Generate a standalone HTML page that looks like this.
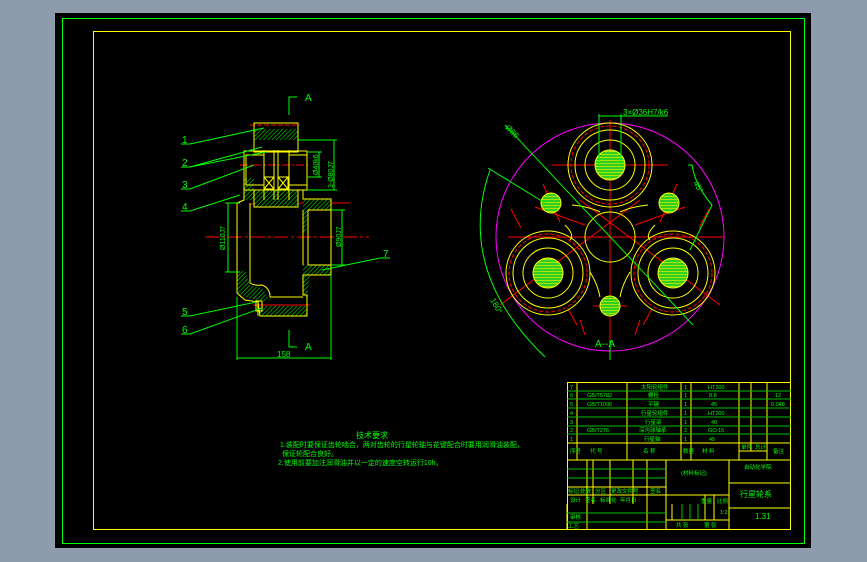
<!DOCTYPE html>
<html><head><meta charset="utf-8"><style>
html,body{margin:0;padding:0;width:867px;height:562px;overflow:hidden;background:#8e9bac;}
svg{display:block}
text{font-family:"Liberation Sans","Noto Sans CJK SC",sans-serif;}
</style></head><body>
<svg width="867" height="562" viewBox="0 0 867 562" xmlns="http://www.w3.org/2000/svg">
<defs>
<pattern id="h" width="3" height="3" patternUnits="userSpaceOnUse" patternTransform="rotate(45)">
<rect width="3" height="3" fill="#000"/><line x1="0" y1="0" x2="0" y2="3" stroke="#00e000" stroke-width="1.2"/></pattern>
<pattern id="g" width="3" height="3" patternUnits="userSpaceOnUse">
<rect width="3" height="3" fill="#2fd020"/><line x1="0" y1="1.5" x2="3" y2="1.5" stroke="#c8e800" stroke-width="0.8"/></pattern>
</defs>
<rect x="0" y="0" width="867" height="562" fill="#8e9bac"/>
<rect x="55" y="13" width="756" height="535" fill="#000"/>
<rect x="62.5" y="18.5" width="742" height="525" fill="none" stroke="#00ff00" stroke-width="1"/>
<rect x="93.5" y="31.5" width="697" height="498" fill="none" stroke="#ffff00" stroke-width="1"/>

<!-- LEFT SECTION VIEW -->
<g fill="none" stroke-width="1">
<line x1="205" y1="237" x2="369" y2="237" stroke="#ff0000" stroke-dasharray="14,3,3,3"/>
<line x1="250" y1="125" x2="300" y2="125" stroke="#ff0000" stroke-dasharray="5,2"/>
<line x1="250" y1="204" x2="300" y2="204" stroke="#ff0000" stroke-dasharray="5,2"/>
<line x1="240" y1="165" x2="310" y2="165" stroke="#ff0000" stroke-dasharray="8,2,2,2"/>
<line x1="300" y1="203" x2="350" y2="203" stroke="#ff0000"/>
<line x1="253" y1="305" x2="310" y2="305" stroke="#ff0000"/>
<rect x="254" y="129" width="44" height="11" fill="url(#h)"/>
<rect x="254" y="190" width="44" height="17" fill="url(#h)"/>
<path d="M237,293 L237,273 L245,270 L250,285 L262,288 L270,300 L258,302 Z" fill="url(#h)"/>
<path d="M303,199 L331,199 L331,210 L308,210 L306,232 L303,232 Z" fill="url(#h)"/>
<path d="M303,265 L331,265 L331,275 L310,275 L307,297 L303,297 Z" fill="url(#h)"/>
<rect x="260" y="306" width="47" height="10" fill="url(#h)"/>
<rect x="244" y="178" width="10" height="22" fill="url(#h)"/>
<g stroke="#ffff00">
<rect x="254" y="123" width="44" height="29"/>
<rect x="244" y="151" width="63" height="39"/>
<rect x="246" y="155" width="18" height="30"/>
<rect x="289" y="155" width="18" height="30"/>
<line x1="264" y1="150" x2="264" y2="200"/><line x1="289" y1="150" x2="289" y2="200"/>
<line x1="274" y1="150" x2="274" y2="200"/><line x1="278" y1="150" x2="278" y2="200"/>
<rect x="264" y="177" width="10" height="12"/><rect x="278" y="177" width="10" height="12"/>
<path d="M264,177 L274,189 M274,177 L264,189 M278,177 L288,189 M288,177 L278,189"/>
<rect x="254" y="190" width="44" height="17"/>
<path d="M237,203 L237,293 L245,300 L258,302 L260,316 L307,316 L307,295 L303,295 L303,275 L331,275 L331,199 L303,199 L303,190"/>
<path d="M250,203 L250,283 Q255,286 262,285 Q270,288 270,297 L303,297"/>
<path d="M244,190 L244,200 L237,203"/>
<line x1="308" y1="210" x2="331" y2="210"/><line x1="308" y1="265" x2="331" y2="265"/>
<line x1="303" y1="210" x2="303" y2="265"/><line x1="308" y1="210" x2="308" y2="265"/>
<line x1="258" y1="302" x2="258" y2="316"/>
<rect x="256" y="301" width="6" height="10"/>
</g>
<g stroke="#00ff00">
<line x1="237" y1="297" x2="237" y2="360"/><line x1="331" y1="275" x2="331" y2="360"/>
<line x1="237" y1="358" x2="331" y2="358"/>
<line x1="228" y1="203" x2="228" y2="272"/><line x1="225" y1="203" x2="240" y2="203"/><line x1="225" y1="272" x2="240" y2="272"/>
<line x1="342" y1="210" x2="342" y2="265"/><line x1="331" y1="210" x2="345" y2="210"/><line x1="331" y1="265" x2="345" y2="265"/>
<line x1="334" y1="140" x2="334" y2="190"/><line x1="298" y1="140" x2="337" y2="140"/><line x1="307" y1="190" x2="337" y2="190"/>
<line x1="319" y1="152" x2="319" y2="177"/><line x1="307" y1="152" x2="322" y2="152"/><line x1="307" y1="177" x2="322" y2="177"/>
<path d="M289,115 L289,97 L297,97"/><path d="M289,330 L289,347 L297,347"/>
<path d="M181,144 L190,144 L264,128"/>
<path d="M181,167 L190,167 L262,147 M190,167 L266,152"/>
<path d="M181,189 L190,189 L254,165"/>
<path d="M181,211 L190,211 L240,195"/>
<path d="M181,316 L190,316 L256,302"/>
<path d="M181,334 L190,334 L262,308"/>
<path d="M390,258 L380,258 L322,270"/>
</g>
</g>
<g fill="#00ff00" font-size="10">
<text x="182" y="143">1</text><text x="182" y="166">2</text><text x="182" y="188">3</text><text x="182" y="210">4</text>
<text x="182" y="315">5</text><text x="182" y="333">6</text><text x="383" y="257">7</text>
<text x="305" y="101">A</text><text x="305" y="350">A</text>
<text x="277" y="357" font-size="8">158</text>
<text x="0" y="0" font-size="7" transform="translate(225,250) rotate(-90)">Ø110J7</text>
<text x="0" y="0" font-size="7" transform="translate(341,247) rotate(-90)">Ø90J7</text>
<text x="0" y="0" font-size="7" transform="translate(318,175) rotate(-90)">Ø40k6</text>
<text x="0" y="0" font-size="7" transform="translate(333,188) rotate(-90)">3-Ø80J7</text>
</g>

<!-- RIGHT VIEW -->
<g fill="none" stroke-width="1">
<circle cx="610" cy="237" r="114" stroke="#ff00ff"/>
<g stroke="#ff0000">
<line x1="508" y1="237" x2="724" y2="237"/>
<line x1="610" y1="120" x2="610" y2="340"/>
<line x1="552" y1="165" x2="668" y2="165"/>
<line x1="500" y1="305" x2="640" y2="200"/>
<line x1="720" y1="305" x2="580" y2="200"/>
<line x1="593" y1="306" x2="627" y2="306"/>
<path d="M543,184 L560,222 M535,207 L585,225 M677,184 L660,222 M685,207 L635,225 M511,209 L521,228 M709,209 L699,228 M568,309 L577,325 M652,309 L643,325 M640,320 L635,335 M580,320 L585,335"/>
</g>
<g stroke="#ffff00">
<circle cx="610" cy="165" r="42"/><circle cx="610" cy="165" r="35"/><circle cx="610" cy="165" r="25"/>
<circle cx="548" cy="273" r="42"/><circle cx="548" cy="273" r="35"/><circle cx="548" cy="273" r="25"/>
<circle cx="673" cy="273" r="42"/><circle cx="673" cy="273" r="35"/><circle cx="673" cy="273" r="25"/>
<circle cx="610" cy="237" r="25"/>
<path d="M572,205 Q590,207 600,212 M648,205 Q630,207 620,212 M565,225 Q575,235 570,240 M655,225 Q645,235 650,240 M590,272 Q598,285 600,297 M630,272 Q622,285 620,297"/>
</g>
<g stroke="#ff0000" stroke-dasharray="4,2">
<circle cx="610" cy="165" r="39"/><circle cx="548" cy="273" r="39"/><circle cx="673" cy="273" r="39"/>
</g>
<g stroke="#ffff00" fill="url(#g)">
<circle cx="610" cy="165" r="15"/><circle cx="548" cy="273" r="15"/><circle cx="673" cy="273" r="15"/>
<circle cx="551" cy="203" r="10"/><circle cx="669" cy="203" r="10"/><circle cx="610" cy="306" r="10"/>
</g>
<g stroke="#00ff00">
<line x1="505" y1="125" x2="693" y2="325"/>
<line x1="610" y1="340" x2="610" y2="360"/>
<path d="M599,165 L599,114 M621,165 L621,114 M599,116 L621,116 L668,116"/>
<path d="M490,170 Q455,270 545,357"/>
<line x1="488" y1="168" x2="545" y2="203"/>
<path d="M688,165 L692,165 Q695,185 712,205 L690,250"/>
</g>
</g>
<g fill="#00ff00" font-size="8">
<text x="623" y="115">3×Ø36H7/k6</text>
<text x="0" y="0" transform="translate(505,128) rotate(45)">Ø86</text>
<text x="0" y="0" transform="translate(693,183) rotate(60)">45°</text>
<text x="0" y="0" transform="translate(490,300) rotate(60)">180°</text>
<text x="595" y="347" font-size="10">A--A</text>
</g>

<!-- technical notes -->
<g fill="#00ff00" font-size="7">
<text x="356" y="438" font-size="8">技术要求</text>
<text x="280" y="447">1.装配时要保证齿轮啮合，两对齿轮的行星轮轴与花键配合时要用润滑油装配，</text>
<text x="282" y="456">保证轮配合良好。</text>
<text x="278" y="465">2.使用前要加注润滑油并以一定的速度空转运行10h。</text>
</g>

<!-- title block -->
<g stroke="#ffff00" fill="none" stroke-width="1">
<rect x="567.5" y="382.5" width="223" height="147"/>
<path d="M567,443 H791 M567,460 H791 M577,383 V460 M627,383 V460 M681,383 V460 M691,383 V460 M739,383 V460 M751,383 V451 M767,383 V460 M739,451 H767"/>
<path d="M666,460 V530 M729,460 V530 M729,483 H791 M729,508 H791 M567,487 H666 M567,495 H729 M666,495 V505 M567,504 V530 M666,520 H729 M705,495 V520 M714,495 V520 M587,460 V530 M593,460 V504 M610,460 V504 M633,460 V504 M647,460 V530 M672,504 V520"/>
</g>
<g stroke="#00c000" stroke-width="1">
<path d="M567,391 H791 M567,399 H791 M567,408 H791 M567,417 H791 M567,426 H791 M567,434 H791 M567,469 H666 M567,478 H666 M567,513 H666 M567,522 H666 M682,504 V520 M690,504 V520 M698,504 V520"/>
</g>
<g fill="#00ff00" font-size="5.5">
<text x="570" y="389">7</text><text x="570" y="397">6</text><text x="570" y="406">5</text><text x="570" y="415">4</text><text x="570" y="424">3</text><text x="570" y="432">2</text><text x="570" y="441">1</text>
<text x="587" y="397">GB/T5782</text><text x="587" y="406">GB/T1096</text><text x="587" y="432">GB/T276</text>
<text x="641" y="389">太阳轮组件</text><text x="648" y="397">螺栓</text><text x="648" y="406">平键</text><text x="641" y="415">行星轮组件</text><text x="645" y="424">行星架</text><text x="639" y="432">深沟球轴承</text><text x="644" y="441">行星轴</text>
<text x="684" y="389">1</text><text x="684" y="397">1</text><text x="684" y="406">1</text><text x="684" y="415">1</text><text x="684" y="424">1</text><text x="684" y="432">2</text><text x="684" y="441">1</text>
<text x="708" y="389">HT200</text><text x="709" y="397">8.8</text><text x="711" y="406">45</text><text x="708" y="415">HT200</text><text x="711" y="424">40</text><text x="708" y="432">GCr15</text><text x="709" y="441">45</text>
<text x="775" y="397">12</text><text x="771" y="406">0.048</text>
<text x="570" y="453">序号</text><text x="590" y="453">代  号</text><text x="643" y="453">名  称</text><text x="683" y="453">数量</text><text x="702" y="453">材  料</text><text x="741" y="449">单件</text><text x="755" y="449">总计</text><text x="773" y="453">备注</text>
<text x="681" y="475">(材料标记)</text>
<text x="744" y="469">自动化学院</text>
<text x="740" y="497" font-size="8">行星轮系</text>
<text x="755" y="519" font-size="8">1.31</text>
<text x="701" y="503">重量</text><text x="717" y="503">比例</text><text x="720" y="514">1:2</text>
<text x="676" y="527">共 张</text><text x="704" y="527">第 张</text>
<text x="568" y="493">标记</text><text x="580" y="493">处数</text><text x="595" y="493">分区</text><text x="611" y="493">更改文件号</text><text x="650" y="493">签名</text>
<text x="570" y="502">设计</text><text x="585" y="502">签名</text><text x="600" y="502">标准化</text><text x="620" y="502">年月日</text>
<text x="570" y="519">审核</text><text x="568" y="528">工艺</text>
</g>
</svg>
</body></html>
